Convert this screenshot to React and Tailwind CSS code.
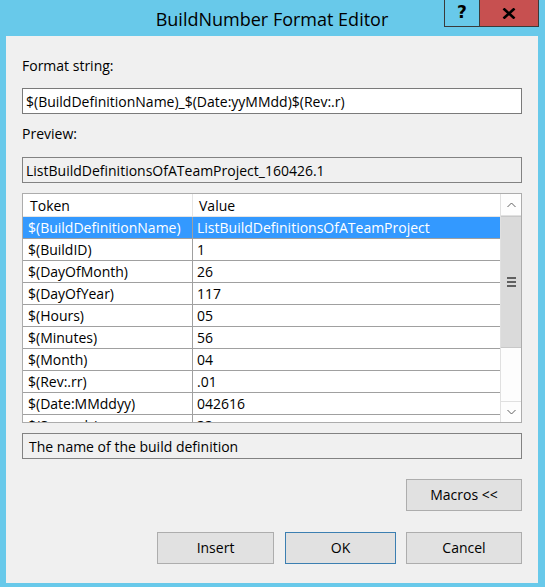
import React from 'react';

const rows = [
    ['$(BuildDefinitionName)', 'ListBuildDefinitionsOfATeamProject'],
    ['$(BuildID)', '1'],
    ['$(DayOfMonth)', '26'],
    ['$(DayOfYear)', '117'],
    ['$(Hours)', '05'],
    ['$(Minutes)', '56'],
    ['$(Month)', '04'],
    ['$(Rev:.rr)', '.01'],
    ['$(Date:MMddyy)', '042616'],
    ['$(Seconds)', '33'],
];

const font = { fontFamily: '"Open Sans", "Noto Sans", sans-serif' };

const Chevron = ({ up }) => (
    <svg width="9" height="6" viewBox="0 0 9 6" className="block">
        <path
            d={up ? 'M0.5 5 L4.5 1 L8.5 5' : 'M0.5 1 L4.5 5 L8.5 1'}
            fill="none"
            stroke="#606060"
            strokeWidth="1"
        />
    </svg>
);

const Button = ({ children, className = '', primary }) => (
    <button
        className={`h-[32px] bg-[#e1e1e1] border text-[14px] text-black leading-none flex items-center justify-center ${
            primary ? 'border-[#3c7fb1]' : 'border-[#adadad]'
        } ${className}`}
    >
        {children}
    </button>
);

export default function App() {
    return (
        <div className="w-[545px] h-[587px] bg-[#68c9ea] flex flex-col pl-[6px] pr-[7px] pb-[4px]" style={font}>
            {/* title bar */}
            <div className="relative h-[36px] shrink-0 flex justify-center">
                <span className="text-[18px] leading-none text-black mt-[10px]">BuildNumber Format Editor</span>
                <div className="absolute top-0 right-[-1px] flex">
                    <div className="w-[36px] h-[27px] border border-t-0 border-[#3a3a3a] flex items-center justify-center">
                        <span className="text-[17px] font-bold leading-none text-black mt-[-1px]" style={{ fontFamily: '"DejaVu Sans", sans-serif' }}>?</span>
                    </div>
                    <div className="w-[59px] h-[27px] bg-[#c75050] border border-t-0 border-l-0 border-[#3a3a3a] flex items-center justify-center">
                        <svg width="14" height="11" viewBox="0 0 14 11">
                            <path d="M1.5 0.5 L12.5 10.5 M12.5 0.5 L1.5 10.5" stroke="#000" strokeWidth="2.6" />
                        </svg>
                    </div>
                </div>
            </div>

            {/* client area */}
            <div className="flex-1 bg-[#f0f0f0] px-4 pt-5 flex flex-col text-[14px] text-black">
                <div className="h-[20px] leading-[20px]">Format string:</div>
                <div className="mt-[12px] h-[26px] bg-white border border-[#7a7a7a] pl-[3px] flex items-center whitespace-nowrap overflow-hidden">
                    $(BuildDefinitionName)_$(Date:yyMMdd)$(Rev:.r)
                </div>

                <div className="mt-[10px] h-[20px] leading-[20px]">Preview:</div>
                <div className="mt-[13px] h-[26px] bg-[#f0f0f0] border border-[#828282] pl-[3px] flex items-center whitespace-nowrap overflow-hidden">
                    ListBuildDefinitionsOfATeamProject_160426.1
                </div>

                {/* token table */}
                <div className="mt-[10px] h-[230px] border border-[#acacac] bg-white flex overflow-hidden">
                    <div className="flex-1 flex flex-col overflow-hidden">
                        <div className="h-[23px] shrink-0 flex border-b border-[#e5e5e5] bg-white">
                            <div className="w-[170px] pl-[7px] border-r border-[#e5e5e5] flex items-center">Token</div>
                            <div className="flex-1 pl-[6px] flex items-center">Value</div>
                        </div>
                        {rows.map(([token, value], i) => (
                            <div
                                key={token}
                                className={`h-[22px] shrink-0 flex border-b border-[#a0a0a0] whitespace-nowrap ${
                                    i === 0 ? 'bg-[#3399ff] text-white' : ''
                                }`}
                            >
                                <div className="w-[170px] pl-[5px] border-r border-[#a0a0a0] flex items-center">{token}</div>
                                <div className="flex-1 pl-[4px] flex items-center">{value}</div>
                            </div>
                        ))}
                    </div>
                    {/* scrollbar */}
                    <div className="w-[21px] shrink-0 flex flex-col bg-[#fdfdfd] border-l border-[#e0e0e0]">
                        <div className="h-[22px] border-b border-[#e0e0e0] flex items-center justify-center">
                            <Chevron up />
                        </div>
                        <div className="h-[132px] bg-[#dadada] border-y border-[#c8c8c8] flex flex-col items-center justify-center gap-[2px]">
                            <div className="w-[9px] h-[2px] bg-[#606060]" />
                            <div className="w-[9px] h-[2px] bg-[#606060]" />
                            <div className="w-[9px] h-[2px] bg-[#606060]" />
                        </div>
                        <div className="flex-1" />
                        <div className="h-[21px] border-t border-[#e0e0e0] flex items-center justify-center">
                            <Chevron />
                        </div>
                    </div>
                </div>

                <div className="mt-[10px] h-[26px] bg-[#f0f0f0] border border-[#828282] pl-[6px] flex items-center">
                    The name of the build definition
                </div>

                <div className="mt-[20px] flex justify-end">
                    <Button className="w-[116px]">Macros &lt;&lt;</Button>
                </div>

                <div className="mt-[21px] flex justify-end">
                    <Button className="w-[117px]">Insert</Button>
                    <Button primary className="w-[111px] ml-[11px]">OK</Button>
                    <Button className="w-[116px] ml-[10px]">Cancel</Button>
                </div>
            </div>
        </div>
    );
}
